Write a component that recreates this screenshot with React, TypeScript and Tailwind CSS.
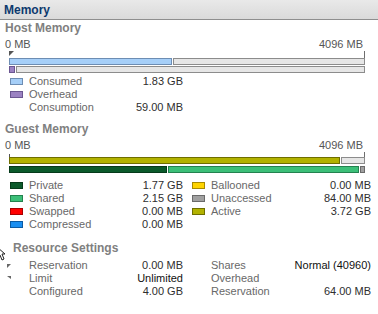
import React from "react";

type Item = { color?: string; border?: string; label: string; value: string; strong?: boolean };

const hostRows: Item[] = [
  { color: "bg-[#a6cff8]", border: "border-[#6d8db3]", label: "Consumed", value: "1.83 GB" },
  { color: "bg-[#9b82c2]", border: "border-[#6b5691]", label: "Overhead", value: "" },
  { label: "Consumption", value: "59.00 MB" },
];

const guestLeft: Item[] = [
  { color: "bg-[#0b5a2b]", border: "border-[#053a1a]", label: "Private", value: "1.77 GB" },
  { color: "bg-[#3cbf78]", border: "border-[#23824f]", label: "Shared", value: "2.15 GB" },
  { color: "bg-[#ff0000]", border: "border-[#a80000]", label: "Swapped", value: "0.00 MB" },
  { color: "bg-[#1a8ef0]", border: "border-[#0b5aa3]", label: "Compressed", value: "0.00 MB" },
];

const guestRight: Item[] = [
  { color: "bg-[#ffd400]", border: "border-[#a88a00]", label: "Ballooned", value: "0.00 MB" },
  { color: "bg-[#a0a0a0]", border: "border-[#6a6a6a]", label: "Unaccessed", value: "84.00 MB" },
  { color: "bg-[#b2b200]", border: "border-[#6e6e00]", label: "Active", value: "3.72 GB" },
];

const resLeft: Item[] = [
  { label: "Reservation", value: "0.00 MB" },
  { label: "Limit", value: "Unlimited", strong: true },
  { label: "Configured", value: "4.00 GB" },
];

const resRight: Item[] = [
  { label: "Shares", value: "Normal (40960)", strong: true },
  { label: "Overhead", value: "" },
  { label: "Reservation", value: "64.00 MB" },
];

const Row = ({ item, left }: { item: Item; left: boolean }) => (
  <div className={`flex h-[13px] items-center leading-[13px] ${left ? "w-[173px] pl-0" : "w-[179px]"}`}>
    <div className="w-[19px] shrink-0">
      {item.color && <div className={`h-[7px] w-[13px] border ${item.color} ${item.border}`} />}
    </div>
    <span className="text-[#686868]">{item.label}</span>
    <span className={`ml-auto ${item.strong ? "text-[#111]" : "text-[#2e2e2e]"}`}>{item.value}</span>
  </div>
);

const Section = ({ title, className }: { title: string; className: string }) => (
  <div className={`h-[14px] text-[12px] font-bold leading-[14px] text-[#808080] ${className}`}>{title}</div>
);

const Scale = () => (
  <div className="mt-[3px] flex h-[13px] w-[363px] justify-between pl-[5px] leading-[13px] text-[#555]">
    <span>0 MB</span>
    <span>4096 MB</span>
  </div>
);

export default function App() {
  return (
    <div
      className="relative h-[314px] w-[378px] overflow-hidden bg-white text-[11px]"
      style={{ fontFamily: '"Liberation Sans", Arial, sans-serif' }}
    >
      {/* header */}
      <div className="flex h-[20px] items-center border-b border-[#8e8e8e] bg-gradient-to-b from-[#e9e9e9] to-[#dadada] px-[4px]">
        <span className="text-[12px] font-bold text-[#0d3a6e]">Memory</span>
      </div>

      {/* host memory */}
      <Section title="Host Memory" className="mt-[1px] pl-[5px]" />
      <Scale />
      <div className="ml-[9px] w-[356px]">
        <div className="flex h-[7px] items-start justify-between">
          <svg width="5" height="5" viewBox="0 0 5 5" className="mt-[0px]">
            <polygon points="0,0 5,0 0,5" fill="#555" />
          </svg>
          <div className="h-[7px] w-px bg-[#6e6e6e]" />
        </div>
        <div className="flex h-[7px] gap-px">
          <div className="w-[163px] border border-[#6d8db3] bg-[#a6cff8]" />
          <div className="flex-1 border border-[#8c8c8c] bg-[#e6e6e6]" />
        </div>
        <div className="mt-px flex h-[7px] gap-px">
          <div className="w-[6px] border border-[#6b5691] bg-[#9b82c2]" />
          <div className="flex-1 border border-[#8c8c8c] bg-[#e6e6e6]" />
        </div>
      </div>
      <div className="mt-[2px] pl-[10px]">
        {hostRows.map((r) => (
          <Row key={r.label} item={r} left />
        ))}
      </div>

      {/* guest memory */}
      <Section title="Guest Memory" className="mt-[8px] pl-[5px]" />
      <Scale />
      <div className="ml-[9px] w-[356px]">
        <div className="flex h-[5px] justify-between">
          <div className="mt-[2px] h-[3px] w-px bg-[#555]" />
          <div className="h-[5px] w-px bg-[#6e6e6e]" />
        </div>
        <div className="flex h-[7px] gap-px">
          <div className="w-[331px] border border-[#6e6e00] bg-[#b2b200]" />
          <div className="flex-1 border border-[#8c8c8c] bg-[#e6e6e6]" />
        </div>
        <div className="mt-[2px] flex h-[7px] gap-px">
          <div className="w-[158px] border border-[#053a1a] bg-[#0b5a2b]" />
          <div className="w-[191px] border border-[#23824f] bg-[#3cbf78]" />
          <div className="flex-1 border border-[#6a6a6a] bg-[#a0a0a0]" />
        </div>
      </div>
      <div className="mt-[6px] flex gap-[9px] pl-[10px]">
        <div>
          {guestLeft.map((r) => (
            <Row key={r.label} item={r} left />
          ))}
        </div>
        <div>
          {guestRight.map((r) => (
            <Row key={r.label} item={r} left={false} />
          ))}
        </div>
      </div>

      {/* resource settings */}
      <Section title="Resource Settings" className="mt-[10px] pl-[13px] text-[#6a6a6a]" />
      <div className="mt-[4px] flex gap-[9px] pl-[10px]">
        <div className="relative">
          {resLeft.map((r) => (
            <Row key={r.label} item={r} left />
          ))}
          <svg width="4" height="4" viewBox="0 0 4 4" className="absolute left-[-3px] top-[5px]">
            <polygon points="0,0 4,0 0,4" fill="#666" />
          </svg>
          <svg width="4" height="4" viewBox="0 0 4 4" className="absolute left-[-3px] top-[17px]">
            <polygon points="0,0 4,0 4,3" fill="#666" />
          </svg>
        </div>
        <div>
          {resRight.map((r) => (
            <Row key={r.label} item={r} left={false} />
          ))}
        </div>
      </div>

      {/* mouse cursor at left edge */}
      <svg width="10" height="16" viewBox="0 0 10 16" className="absolute left-[-4px] top-[246px]">
        <path d="M1 1 L1 12 L4 9 L6 14 L8 13 L6 8 L9 8 Z" fill="white" stroke="#222" strokeWidth="1" />
      </svg>
    </div>
  );
}
